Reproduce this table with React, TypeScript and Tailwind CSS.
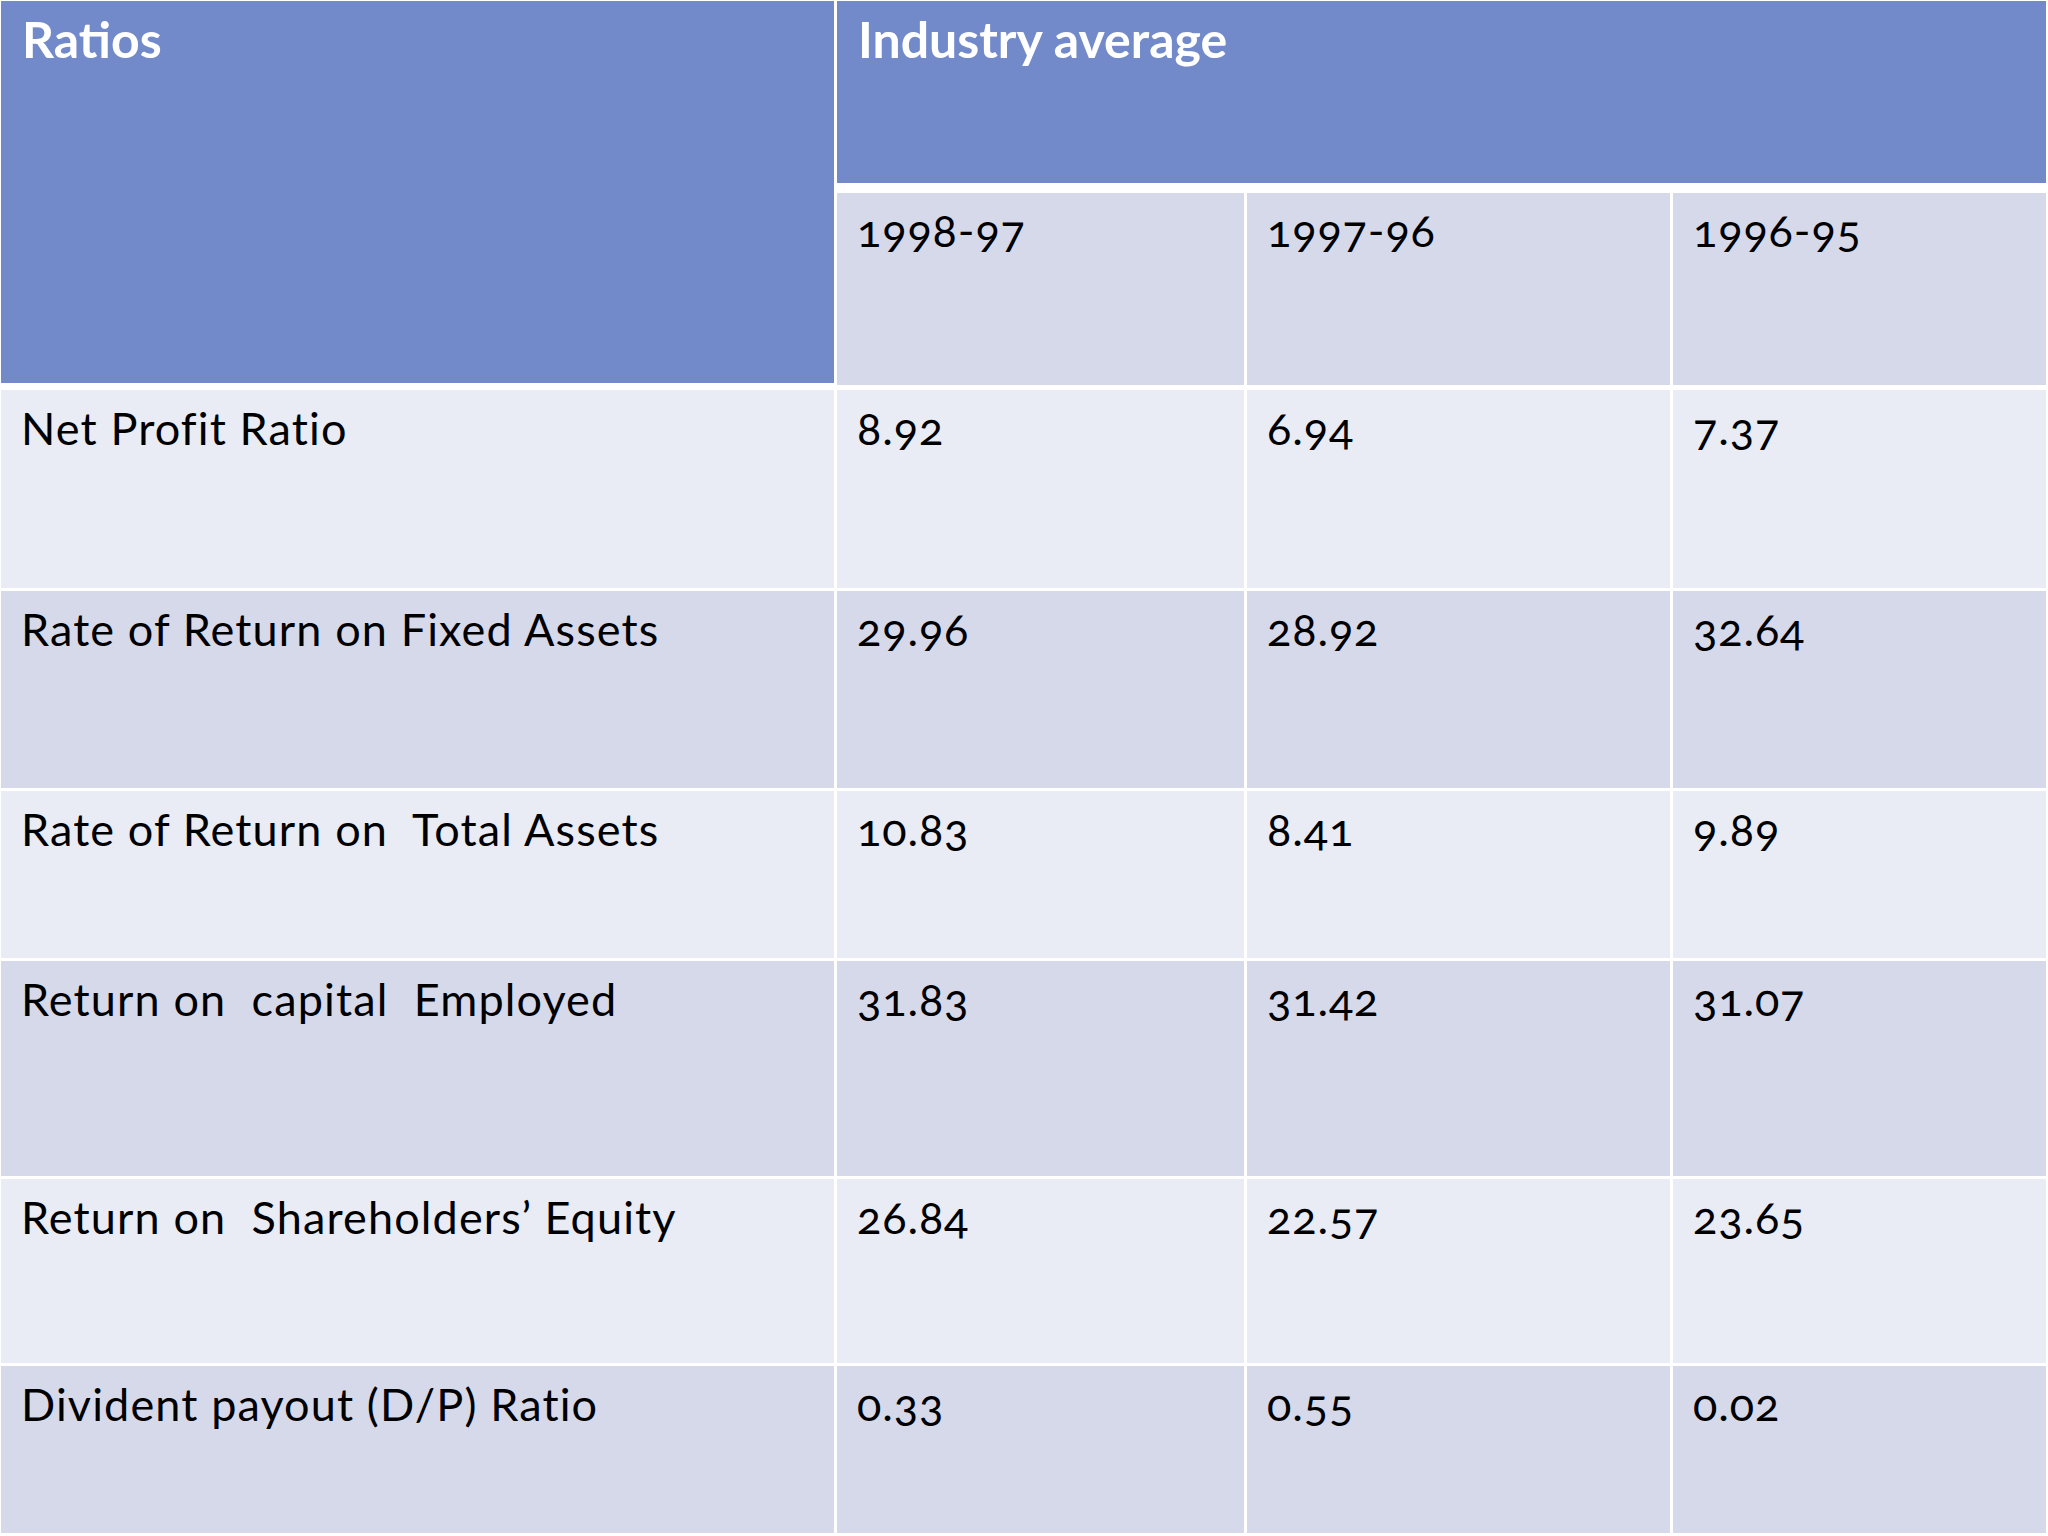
const years = ["1998-97", "1997-96", "1996-95"];

const rows = [
  { label: "Net Profit Ratio", values: ["8.92", "6.94", "7.37"], h: "h-[198px]", bg: "bg-[#e9ebf5]" },
  { label: "Rate of Return on Fixed Assets", values: ["29.96", "28.92", "32.64"], h: "h-[197px]", bg: "bg-[#d6d9ea]" },
  { label: "Rate of Return on  Total Assets", values: ["10.83", "8.41", "9.89"], h: "h-[167px]", bg: "bg-[#e9ebf5]" },
  { label: "Return on  capital  Employed", values: ["31.83", "31.42", "31.07"], h: "h-[215px]", bg: "bg-[#d6d9ea]" },
  { label: "Return on  Shareholders\u2019 Equity", values: ["26.84", "22.57", "23.65"], h: "h-[184px]", bg: "bg-[#e9ebf5]" },
  { label: "Divident payout (D/P) Ratio", values: ["0.33", "0.55", "0.02"], h: "h-[167px]", bg: "bg-[#d6d9ea]" },
];

export default function App() {
  return (
    <div className="w-[2048px] h-[1536px] bg-white pt-px pl-px flex flex-col font-['Lato',sans-serif] overflow-hidden">
      {/* header */}
      <div className="flex gap-[3px] h-[384px]">
        <div className="w-[833px] h-[382px] bg-[#728ac9] pl-[21px] pt-[8px] text-[50px] leading-[1.2] font-bold text-white">
          Ratios
        </div>
        <div className="w-[1209px] flex flex-col">
          <div className="h-[182px] bg-[#728ac9] pl-[21px] pt-[8px] text-[50px] leading-[1.2] font-bold text-white">
            Industry average
          </div>
          <div className="mt-[10px] h-[192px] grid grid-cols-[407px_423px_373px] gap-[3px]">
            {years.map((y) => (
              <div key={y} className="bg-[#d6d9ea] pl-[20px] pt-[10px] text-[45px] leading-[1.2] tracking-[0.02em] text-black oldstyle-nums">
                {y}
              </div>
            ))}
          </div>
        </div>
      </div>

      {/* body */}
      <div className="mt-[5px] grid grid-cols-[833px_407px_423px_373px] gap-[3px]">
        {rows.map((r) => (
          <div key={r.label} className="contents">
            <div className={`${r.h} ${r.bg} pl-[20px] pt-[11px] text-[45px] leading-[1.2] tracking-[0.025em] text-black whitespace-pre`}>
              {r.label}
            </div>
            {r.values.map((v, i) => (
              <div key={i} className={`${r.h} ${r.bg} pl-[20px] pt-[11px] text-[45px] leading-[1.2] tracking-[0.02em] text-black oldstyle-nums`}>
                {v}
              </div>
            ))}
          </div>
        ))}
      </div>
    </div>
  );
}
